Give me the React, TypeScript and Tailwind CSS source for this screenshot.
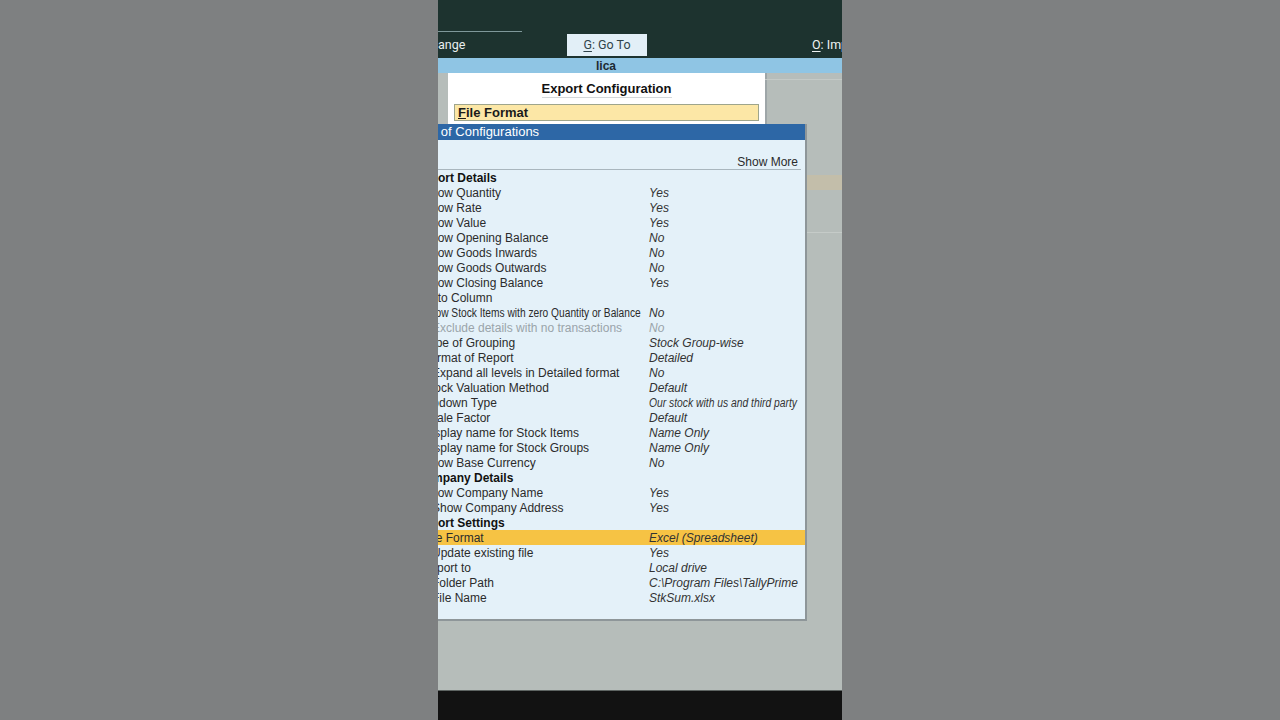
import React from 'react';

type Row = {
  label: string;
  value?: string;
  level: 'head' | 'item' | 'sub';
  dim?: boolean;
  narrow?: boolean;
  narrowValue?: boolean;
  active?: boolean;
};

// Rows of the "List of Configurations" panel
const rows: Row[] = [
  { label: 'Export Details', level: 'head' },
  { label: 'Show Quantity', value: 'Yes', level: 'item' },
  { label: 'Show Rate', value: 'Yes', level: 'item' },
  { label: 'Show Value', value: 'Yes', level: 'item' },
  { label: 'Show Opening Balance', value: 'No', level: 'item' },
  { label: 'Show Goods Inwards', value: 'No', level: 'item' },
  { label: 'Show Goods Outwards', value: 'No', level: 'item' },
  { label: 'Show Closing Balance', value: 'Yes', level: 'item' },
  { label: 'Auto Column', level: 'item' },
  { label: 'Show Stock Items with zero Quantity or Balance', value: 'No', level: 'item', narrow: true },
  { label: 'Exclude details with no transactions', value: 'No', level: 'sub', dim: true },
  { label: 'Type of Grouping', value: 'Stock Group-wise', level: 'item' },
  { label: 'Format of Report', value: 'Detailed', level: 'item' },
  { label: 'Expand all levels in Detailed format', value: 'No', level: 'sub' },
  { label: 'Stock Valuation Method', value: 'Default', level: 'item' },
  { label: 'Godown Type', value: 'Our stock with us and third party', level: 'item', narrowValue: true },
  { label: 'Scale Factor', value: 'Default', level: 'item' },
  { label: 'Display name for Stock Items', value: 'Name Only', level: 'item' },
  { label: 'Display name for Stock Groups', value: 'Name Only', level: 'item' },
  { label: 'Show Base Currency', value: 'No', level: 'item' },
  { label: 'Company Details', level: 'head' },
  { label: 'Show Company Name', value: 'Yes', level: 'item' },
  { label: 'Show Company Address', value: 'Yes', level: 'sub' },
  { label: 'Export Settings', level: 'head' },
  { label: 'File Format', value: 'Excel (Spreadsheet)', level: 'item', active: true },
  { label: 'Update existing file', value: 'Yes', level: 'sub' },
  { label: 'Export to', value: 'Local drive', level: 'item' },
  { label: 'Folder Path', value: 'C:\\Program Files\\TallyPrime', level: 'sub' },
  { label: 'File Name', value: 'StkSum.xlsx', level: 'sub' },
];

const indent = {
  head: 'pl-0 font-bold text-[#111]',
  item: 'pl-[7px] text-[#2b2b2b]',
  sub: 'pl-[16px] text-[#2b2b2b]',
};

const ConfigRow = ({ row }: { row: Row }) => (
  <div
    className={`flex items-center h-[15px] ml-[-22px] whitespace-nowrap ${
      row.active ? 'bg-[#f6c344]' : ''
    }`}
  >
    <div className={`w-[233px] shrink-0 overflow-hidden ${indent[row.level]} ${row.dim ? 'text-[#9aa4aa]' : ''}`}>
      {row.narrow ? (
        <span className="inline-block origin-left scale-x-[0.85]">{row.label}</span>
      ) : (
        row.label
      )}
    </div>
    {row.value && (
      <div className={`italic ${row.dim ? 'text-[#9aa4aa]' : 'text-[#333]'}`}>
        {row.narrowValue ? (
          <span className="inline-block origin-left scale-x-[0.86]">{row.value}</span>
        ) : (
          row.value
        )}
      </div>
    )}
  </div>
);

export default function App() {
  return (
    <div className="w-[1280px] h-[720px] bg-[#7e8081] flex justify-center">
      <div className="w-[404px] h-[720px] flex flex-col overflow-hidden bg-[#b6bdba]">
        {/* Top bar */}
        <div className="h-[58px] shrink-0 bg-[#1d332f] font-['Roboto',sans-serif] text-[12.5px]">
          <div className="h-[31px]" />
          <div className="h-px w-[84px] bg-[#7f989a]" />
          <div className="flex items-center h-[22px] mt-[2px] whitespace-nowrap">
            <div className="w-[129px] shrink-0 text-[#e8eeee]">ange</div>
            <div className="w-[80px] shrink-0 h-[22px] bg-[#e2eff7] text-[#30434a] flex items-center justify-center">
              <span className="underline underline-offset-2">G</span>:&nbsp;Go To
            </div>
            <div className="ml-[165px] shrink-0 text-[#eef2f2]">
              <span className="underline underline-offset-2">O</span>:&nbsp;Import
            </div>
          </div>
        </div>

        {/* Company strip */}
        <div className="h-[15px] shrink-0 bg-[#8fc5e4] flex items-center pl-[158px] font-['Liberation_Sans',Arial,sans-serif] text-[12px] font-bold text-[#1d2a33]">
          lica
        </div>

        {/* Body */}
        <div className="flex-1 flex flex-col font-['Liberation_Sans',Arial,sans-serif] text-[12px]">
          <div className="flex">
            <div className="ml-[10px] w-[317px] shrink-0 h-[51px] bg-white shadow-[2px_0_0_#9ea6a8] flex flex-col">
              <div className="flex justify-center pt-[8px]">
                <span className="font-bold text-[13px] text-[#111] leading-[16px] border-b border-[#d4d8da]">
                  Export Configuration
                </span>
              </div>
              <div className="mx-[6px] mt-[6px] h-[17px] bg-[#fce7a6] border border-[#9ea58c] flex items-center pl-[3px] font-bold text-[13px] text-[#1a1a1a]">
                <span className="underline">F</span>ile Format
              </div>
            </div>
            <div className="flex-1 flex flex-col">
              <div className="mt-[6px] h-px bg-[#c4cac7]" />
            </div>
          </div>

          <div className="flex">
            <div className="w-[369px] shrink-0 h-[497px] bg-[#e4f1f9] border-r-2 border-b-2 border-[#8e9699] flex flex-col overflow-hidden">
              <div className="h-[16px] bg-[#2d67a6] text-white text-[13px] flex items-center whitespace-nowrap">
                <span className="ml-[-21px]">List of Configurations</span>
              </div>
              <div className="pt-[14px]">
                <div className="h-[16px] flex items-center justify-end pr-[3px] mr-[4px] border-b border-[#a9b6be] text-[#2b2b2b]">
                  Show More
                </div>
                {rows.map((row) => (
                  <ConfigRow key={row.label} row={row} />
                ))}
              </div>
            </div>
            <div className="flex-1 flex flex-col">
              <div className="mt-[51px] h-[15px] bg-[#c3beaa]" />
              <div className="mt-[42px] h-px bg-[#c5cbc8]" />
            </div>
          </div>
        </div>

        {/* Bottom bar */}
        <div className="h-[30px] shrink-0 bg-[#121212] border-t border-[#5e6462]" />
      </div>
    </div>
  );
}
